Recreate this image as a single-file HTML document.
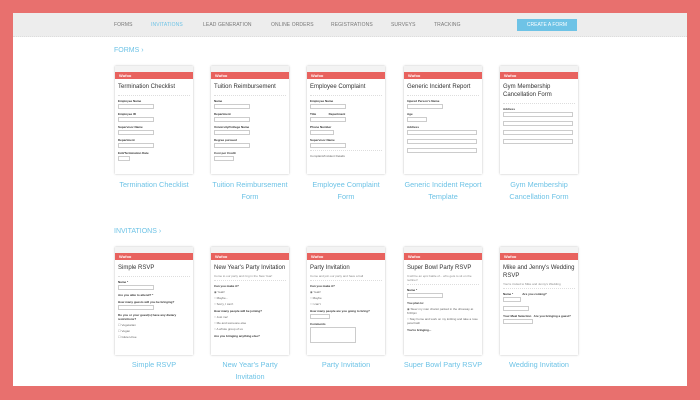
<!DOCTYPE html>
<html><head><meta charset="utf-8"><style>
*{margin:0;padding:0;box-sizing:border-box}
body{width:700px;height:400px;background:#e8706e;position:relative;overflow:hidden;font-family:"Liberation Sans",sans-serif}
#w{position:absolute;left:13px;top:13px;width:674px;height:373px;background:#fff}
#nav{position:absolute;left:0;top:0;width:674px;height:24px;background:#ededed;border-bottom:1px dotted #ddd}
.n{position:absolute;top:9px;font-size:5px;color:#777;letter-spacing:.1px}
.btn{position:absolute;left:504px;top:6px;width:60px;height:12px;background:#6ec3e6;color:#fff;font-size:5px;text-align:center;line-height:12px}
.h{position:absolute;font-size:7px;color:#6ec3e6}
.c{position:absolute;width:78px;height:108px;background:#fff;box-shadow:0 0 2px #bbb;overflow:hidden}
.c .top{height:6px;background:#f3f3f3}
.c .red{height:7px;background:#e8625e;color:#fff;font-size:4px;font-weight:bold;padding-left:4px;line-height:7px}
.c .t{font-size:6px;color:#333;padding:4px 3px 2px;line-height:8px}
.c .s{font-size:3px;color:#888;padding:0 3px;line-height:4px}
.c hr{border:0;border-top:1px dotted #ddd;margin:2px 3px 3px}
.c .l{font-size:3px;color:#333;font-weight:bold;padding:0 3px;margin-top:3px}
.c .b{height:5px;border:1px solid #ccc;margin:1px 3px 0;width:36px}
.c .o{font-size:3px;color:#666;padding:0 3px;margin-top:2px}
.lb{position:absolute;width:80px;text-align:center;font-size:7.3px;color:#6ec3e6;line-height:12px}
</style></head><body><div id="w">
<div id="nav">
<span class="n" style="left:101px">FORMS</span>
<span class="n" style="left:138px;color:#6ec3e6">INVITATIONS</span>
<span class="n" style="left:190px">LEAD GENERATION</span>
<span class="n" style="left:258px">ONLINE ORDERS</span>
<span class="n" style="left:318px">REGISTRATIONS</span>
<span class="n" style="left:378px">SURVEYS</span>
<span class="n" style="left:421px">TRACKING</span>
<div class="btn">CREATE A FORM</div>
</div>
<div class="h" style="left:101px;top:34px">FORMS ›</div>
<div class="h" style="left:101px;top:215px">INVITATIONS ›</div>

<div class="c" style="left:102px;top:53px"><div class="top"></div><div class="red">Wufoo</div><div class="t">Termination Checklist</div><hr><div class="l">Employee Name</div><div class="b"></div><div class="l">Employee ID</div><div class="b"></div><div class="l">Supervisor Name</div><div class="b"></div><div class="l">Department</div><div class="b"></div><div class="l">Exit/Termination Date</div><div class="b" style="width:12px"></div></div>
<div class="c" style="left:198px;top:53px"><div class="top"></div><div class="red">Wufoo</div><div class="t">Tuition Reimbursement</div><hr><div class="l">Name</div><div class="b"></div><div class="l">Department</div><div class="b"></div><div class="l">University/College Name</div><div class="b"></div><div class="l">Degree pursued</div><div class="b"></div><div class="l">Cost per Credit</div><div class="b" style="width:20px"></div></div>
<div class="c" style="left:294px;top:53px"><div class="top"></div><div class="red">Wufoo</div><div class="t">Employee Complaint</div><hr><div class="l">Employee Name</div><div class="b"></div><div class="l">Title &nbsp; &nbsp; &nbsp; &nbsp; &nbsp; &nbsp; &nbsp; Department</div><div class="b"></div><div class="l">Phone Number</div><div class="b" style="width:24px"></div><div class="l">Supervisor Name</div><div class="b"></div><hr><div class="o">Complaint/Incident Details</div></div>
<div class="c" style="left:391px;top:53px"><div class="top"></div><div class="red">Wufoo</div><div class="t">Generic Incident Report</div><hr><div class="l">Injured Person's Name</div><div class="b"></div><div class="l">Age</div><div class="b" style="width:20px"></div><div class="l">Address</div><div class="b" style="width:70px"></div><div class="b" style="width:70px;margin-top:4px"></div><div class="b" style="width:70px;margin-top:4px"></div></div>
<div class="c" style="left:487px;top:53px"><div class="top"></div><div class="red">Wufoo</div><div class="t">Gym Membership Cancellation Form</div><hr><div class="l">Address</div><div class="b" style="width:70px"></div><div class="b" style="width:70px;margin-top:4px"></div><div class="b" style="width:70px;margin-top:4px"></div><div class="b" style="width:70px;margin-top:4px"></div></div>

<div class="lb" style="left:101px;top:166px">Termination Checklist</div>
<div class="lb" style="left:197px;top:166px">Tuition Reimbursement Form</div>
<div class="lb" style="left:293px;top:166px">Employee Complaint Form</div>
<div class="lb" style="left:390px;top:166px">Generic Incident Report Template</div>
<div class="lb" style="left:486px;top:166px">Gym Membership Cancellation Form</div>

<div class="c" style="left:102px;top:234px"><div class="top"></div><div class="red">Wufoo</div><div class="t">Simple RSVP</div><hr><div class="l">Name *</div><div class="b"></div><div class="l">Are you able to attend? *</div><div class="l">How many guests will you be bringing?</div><div class="b"></div><div class="l">Do you or your guest(s) have any dietary restrictions?</div><div class="o">☐ Vegetarian</div><div class="o">☐ Vegan</div><div class="o">☐ Gluten-free</div></div>
<div class="c" style="left:198px;top:234px"><div class="top"></div><div class="red">Wufoo</div><div class="t">New Year's Party Invitation</div><div class="s">Come to our party and ring in the New Year!</div><hr><div class="l">Can you make it?</div><div class="o">◉ Yeah!</div><div class="o">○ Maybe...</div><div class="o">○ Sorry, I can't</div><div class="l">How many people will be joining?</div><div class="o">○ Just me!</div><div class="o">○ Me and someone else</div><div class="o">○ A whole group of us</div><div class="l">Are you bringing anything else?</div></div>
<div class="c" style="left:294px;top:234px"><div class="top"></div><div class="red">Wufoo</div><div class="t">Party Invitation</div><div class="s">Come and join our party and have a ball</div><hr><div class="l">Can you make it?</div><div class="o">◉ Yeah!</div><div class="o">○ Maybe</div><div class="o">○ I can't</div><div class="l">How many people are you going to bring?</div><div class="b" style="width:20px"></div><div class="l">Comments</div><div class="b" style="height:16px;width:46px"></div></div>
<div class="c" style="left:391px;top:234px"><div class="top"></div><div class="red">Wufoo</div><div class="t">Super Bowl Party RSVP</div><div class="s">It will be an epic battle of... who gets to sit on the recliner!</div><hr><div class="l">Name *</div><div class="b"></div><div class="l">You plan to:</div><div class="o">◉ Steer my man chariot parked in the driveway at 6:00pm</div><div class="o">○ Stay home and work on my knitting and take a rose petal bath</div><div class="l">You're bringing...</div></div>
<div class="c" style="left:487px;top:234px"><div class="top"></div><div class="red">Wufoo</div><div class="t">Mike and Jenny's Wedding RSVP</div><div class="s">You're invited to Mike and Jenny's Wedding</div><hr><div class="l">Name * &nbsp; &nbsp; &nbsp; &nbsp; &nbsp; Are you coming?</div><div class="b" style="width:18px"></div><div class="b" style="width:26px;margin-top:4px"></div><div class="l">Your Meal Selection &nbsp; Are you bringing a guest?</div><div class="b" style="width:30px"></div></div>

<div class="lb" style="left:101px;top:346px">Simple RSVP</div>
<div class="lb" style="left:197px;top:346px">New Year's Party Invitation</div>
<div class="lb" style="left:293px;top:346px">Party Invitation</div>
<div class="lb" style="left:390px;top:346px">Super Bowl Party RSVP</div>
<div class="lb" style="left:486px;top:346px">Wedding Invitation</div>
</div></body></html>
